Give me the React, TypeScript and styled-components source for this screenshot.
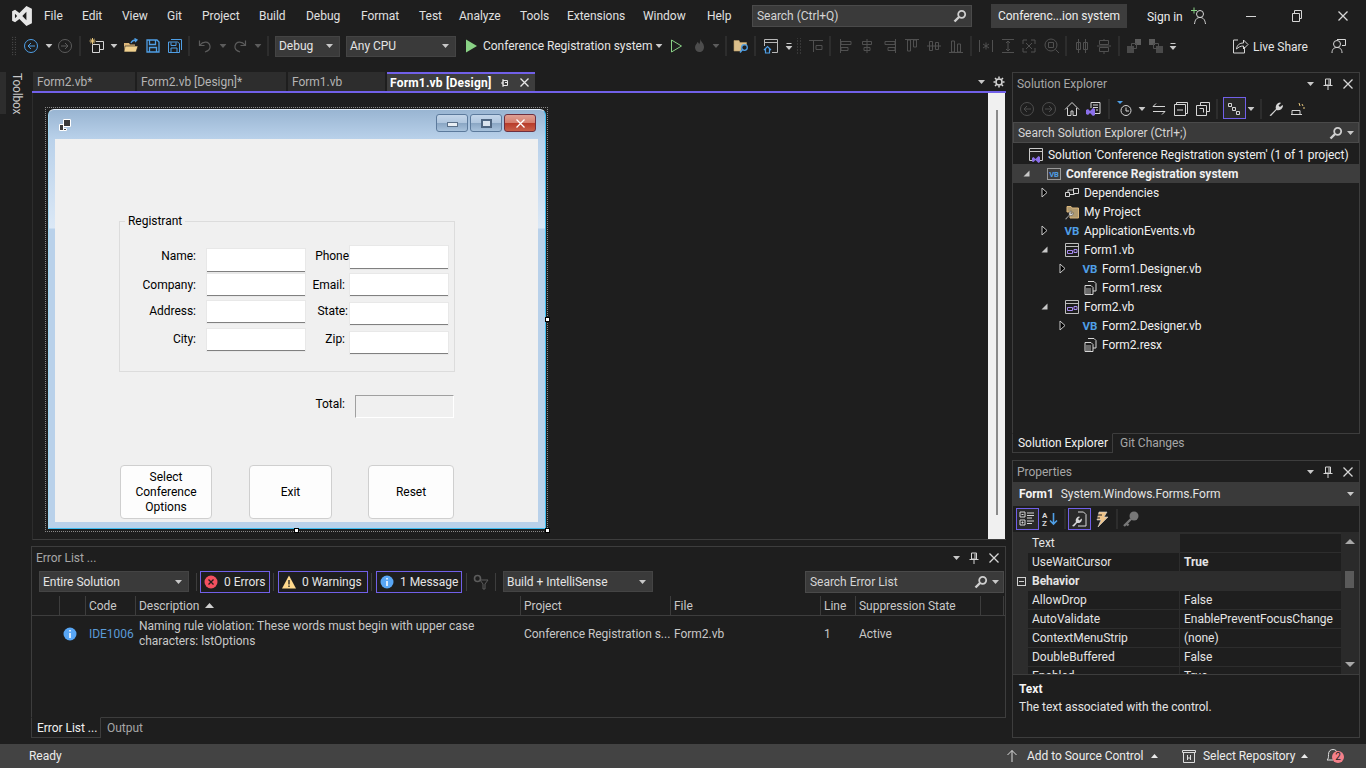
import React, { ReactNode } from 'react';
import styled, { createGlobalStyle } from 'styled-components';

const FONT = `Roboto, "Noto Sans", "Liberation Sans", sans-serif`;
const ACCENT = '#7160e8';

const GlobalStyle = createGlobalStyle`
  html, body { margin: 0; padding: 0; background: #1e1e1e; }
  * { box-sizing: border-box; }
  body { font-family: ${FONT}; font-size: 12px; color: #e4e4e4; letter-spacing: -0.03px; }
`;

const Shell = styled.div`
  width: 1366px;
  height: 768px;
  display: flex;
  flex-direction: column;
  overflow: hidden;
  background: #1e1e1e;
`;

/* ---------- drawing helpers ---------- */

const Glyph = styled.svg`
  display: block;
  flex: none;
`;

const Ico = ({ s = 16, vb, children }: { s?: number; vb?: string; children: ReactNode }) => (
  <Glyph width={s} height={s} viewBox={vb || `0 0 ${s} ${s}`} fill="none">
    {children}
  </Glyph>
);

const DIM = '#5c5c5c';
const FAINT = '#505050';
const LITE = '#d6d6d6';
const BLUE = '#4f9fe6';

const Caret = ({ c = '#c8c8c8', up }: { c?: string; up?: boolean }) => (
  <Glyph width="7" height="4" viewBox="0 0 7 4">
    <path d={up ? 'M0 4h7L3.500 0z' : 'M0 0h7L3.500 4z'} fill={c} />
  </Glyph>
);

const CaretBar = () => (
  <Glyph width="7" height="7" viewBox="0 0 7 7">
    <path d="M1 0h5v1H1zM0 3h7L3.500 7z" fill="#c8c8c8" />
  </Glyph>
);

const Logo = () => (
  <Glyph width="22" height="22" viewBox="0 0 20 20">
    <path
      fillRule="evenodd"
      d="M14 1l5 2.400v13.200L14 19l-6.400-6.300-3.900 3L1 14.300V5.700l2.700-1.400 3.900 3L14 1zm0 5.200L10.300 10l3.700 3.800V6.200zM3.600 8v4l2-2-2-2z"
      fill="#e6e6e6"
    />
  </Glyph>
);

const CircleArrow = ({ c, back }: { c: string; back?: boolean }) => (
  <Ico>
    <circle cx="8" cy="8" r="6.500" stroke={c} />
    <path d={back ? 'M12 8H5M8 5L5 8l3 3' : 'M4 8h7M8 5l3 3-3 3'} stroke={c} />
  </Ico>
);

const NewProject = () => (
  <Ico>
    <path d="M3.500 0v6M.5 3h6M1.300 1l4.400 4M5.700 1L1.300 5" stroke="#e8c77c" />
    <path d="M3.500 6.500h7v8h-7zM7 3.500h7.500v8H10.500" stroke={LITE} />
  </Ico>
);

const OpenFolder = () => (
  <Ico>
    <path d="M1 14V5h5l1 1.500h5V14z" fill="#dcb67a" />
    <path d="M2 8h13l-2 6H1z" fill="#f0d08e" stroke="#1e1e1e" strokeWidth=".6" />
    <path d="M8 5c1-2.500 3-3 5-3M11.500 .5L14 2l-2 2" stroke={BLUE} strokeWidth="1.300" />
  </Ico>
);

const Save = () => (
  <Ico>
    <path d="M2 2h10l2 2v10H2zM4.500 2.500v4h6v-4M4.500 14V9.500h7V14" stroke={BLUE} strokeWidth="1.300" />
  </Ico>
);

const SaveAll = () => (
  <Ico>
    <path d="M4 1.500h10.500V12M1.500 4h9l2 1.500v9h-11zM4 4.500v3h5v-3M4 14V10h6v4" stroke={BLUE} />
  </Ico>
);

const Undo = ({ flip }: { flip?: boolean }) => (
  <Ico>
    <g transform={flip ? 'matrix(-1 0 0 1 16 0)' : undefined}>
      <path d="M3 7c3-4 9-4 10 1 .5 3-2 5-5 6M2.500 2.500V7.500h5" stroke={DIM} strokeWidth="1.200" />
    </g>
  </Ico>
);

const Play = () => (
  <Ico>
    <path d="M3 1.500L14 8 3 14.500z" fill="#89d185" />
  </Ico>
);

const PlayOutline = () => (
  <Ico>
    <path d="M3.500 2L13.500 8l-10 6z" stroke="#89d185" />
  </Ico>
);

const Flame = () => (
  <Ico>
    <path d="M8 1c1 3 4 4 4 8 0 3-2 5-4.500 5S3 12 3 9.500C3 7 5 6 5.500 4c1 .5 1.500 1.500 1.500 2.500C8 5 8.500 3 8 1z" fill="#4d4d4d" />
  </Ico>
);

const FolderSearch = () => (
  <Ico>
    <path d="M1 13V2.500h5l1 2h6.500V7H9.500L8 10v3z" fill="#dcc08c" stroke="#b89a66" strokeWidth=".6" />
    <circle cx="11.500" cy="9.500" r="2.800" stroke={BLUE} strokeWidth="1.300" />
    <path d="M9.500 11.500l-2.500 3" stroke={BLUE} strokeWidth="1.500" />
  </Ico>
);

const WinHome = () => (
  <Ico>
    <path d="M9 14.500h5.500v-13h-13V8M1.500 4.500h13" stroke="#b8b8b8" />
    <path d="M1 12l3.500-3.500L8 12M2.500 11v4h4v-4" stroke={BLUE} strokeWidth="1.200" />
  </Ico>
);

const Dots = () => (
  <Ico>
    <path d="M6 0h1M9 0h1M6 3h1M9 3h1M6 6h1M9 6h1M6 9h1M9 9h1M6 12h1M9 12h1M6 15h1M9 15h1" stroke={FAINT} />
  </Ico>
);

const Align = ({ d }: { d: string }) => (
  <Ico>
    <path d={d} stroke={FAINT} />
  </Ico>
);

const ALIGN = {
  t: 'M1 2.500h14M5.500 3v11M8 7.500h6v4H8z',
  a: 'M2.500 1v14M3 3.500h10v3H3zM3 9.500h7v3H3z',
  b: 'M8 1v14M3.500 3.500h9v3h-9zM5 9.500h6v3H5z',
  c: 'M13.500 1v14M3 3.500h10v3H3zM6 9.500h7v3H6z',
  d: 'M1 1.500h14M3.500 2v11h3V2zM9.500 2v7h3V2z',
  e: 'M1 8h14M3.500 3.500v9h3v-9zM9.500 4.500v7h3v-7z',
  f: 'M1 14.500h14M3.500 3v11h3V3zM9.500 6v8h3V6z',
  g: 'M1.500 2v12M14.500 2v12M8 4.500v7M5 6l6 4M11 6l-6 4',
  h: 'M2 1.500h12M2 14.500h12M8 3v10M6 5l2-2 2 2M6 11l2 2 2-2',
  i: 'M2 6V2h4M10 2h4v4M14 10v4h-4M6 14H2v-4M5 5l6 6M11 5l-6 6',
  j: 'M7 1a6 6 0 100 12A6 6 0 007 1zM11.500 11.500L15 15M4.500 4.500h5v5h-5z',
  k: 'M2.500 4.500h4v7h-4zM9.500 4.500h4v7h-4zM4.500 1v14M11.500 1v14',
  l: 'M3.500 2.500h9v4h-9zM3.500 9.500h9v4h-9zM1 8h14M8 1v2M8 14v2',
};

const Layered = ({ flip }: { flip?: boolean }) => (
  <Ico>
    <g transform={flip ? 'matrix(-1 0 0 1 16 0)' : undefined}>
      <path d="M1 8h7v7H1z" fill="#4a4a4a" />
      <path d="M9 1h6v6H9z" fill={DIM} />
      <path d="M5.500 5.500h5v5h-5z" stroke={FAINT} />
    </g>
  </Ico>
);

const LiveShare = () => (
  <Ico s={18}>
    <path d="M7 3H2.500v13h11V10" stroke={LITE} />
    <path d="M5.500 12c.5-4 3-6 7-6V3l4.500 4.500L12.500 12V9c-3 0-5 1-7 3z" stroke={LITE} />
  </Ico>
);

const Feedback = () => (
  <Ico s={18}>
    <path d="M7 2.500h8.500v6H12" stroke={LITE} />
    <circle cx="7" cy="7" r="3.500" stroke={LITE} />
    <path d="M2 16c0-4 2-5.500 5-5.500S12 12 12 16" stroke={LITE} />
  </Ico>
);

const Person = () => (
  <Ico s={18}>
    <path d="M4 .5v6M1 3.500h6" stroke="#89d185" />
    <circle cx="10" cy="7" r="3.500" stroke={LITE} />
    <path d="M4.500 17c.5-4 2-6.500 5.500-6.500s5 2.500 5.500 6.500" stroke={LITE} />
  </Ico>
);

const Magnifier = ({ c = '#cfcfcf' }: { c?: string }) => (
  <Ico s={14}>
    <circle cx="8.700" cy="5.300" r="3.500" stroke={c} strokeWidth="1.800" />
    <path d="M6 8L1.500 12.500" stroke={c} strokeWidth="2.400" />
  </Ico>
);

const Pin = () => (
  <Ico s={12}>
    <path d="M3.500 1h5v6h-5zM1.500 7.500h9M6 8v4M7 1.500v5" stroke={LITE} />
  </Ico>
);

const TabPin = () => (
  <Ico s={10}>
    <path d="M3 2.500h4.500v5H3zM1 5h2M3 1v8M5 4.500h2.500" stroke="#e8e8e8" />
  </Ico>
);

const Cross = ({ s = 12, c = LITE }: { s?: number; c?: string }) => (
  <Ico s={s}>
    <path d={`M1.500 1.500l${s - 3} ${s - 3}M${s - 1.5} 1.500l-${s - 3} ${s - 3}`} stroke={c} strokeWidth="1.300" />
  </Ico>
);

const Gear = () => (
  <Ico s={12}>
    <circle cx="6" cy="6" r="3" stroke={LITE} strokeWidth="1.500" />
    <path d="M6 .5v2M6 9.500v2M.5 6h2M9.500 6h2M2 2l1.500 1.500M8.500 8.500L10 10M10 2L8.500 3.500M3.500 8.500L2 10" stroke={LITE} strokeWidth="1.500" />
  </Ico>
);

const Home = () => (
  <Ico>
    <path d="M1 8.500L8 1.500l7 7M3.500 7v7.500h3.500V10h2v4.500h3.500V7" stroke={LITE} />
  </Ico>
);

const VsDoc = () => (
  <Ico>
    <path d="M6 7V1.500h9v11H10" stroke={LITE} />
    <path d="M8 4h5M8 6.500h5M11 9h2" stroke={LITE} />
    <path d="M1 9l2-1 2 2 3-3 2 1v6l-2 1-3-3-2 2-2-1z" fill="#8a6fe8" />
  </Ico>
);

const History = () => (
  <Ico>
    <path d="M0 0h6L3 3z" fill={BLUE} />
    <circle cx="9" cy="9.500" r="5" stroke={LITE} />
    <path d="M9 6.500v3.500h3" stroke={LITE} />
  </Ico>
);

const Sync = () => (
  <Ico>
    <path d="M14 5.500H2M5 2.500L2 5.500M2 10.500h12M11 13.500l3-3" stroke={LITE} />
  </Ico>
);

const Collapse = () => (
  <Ico>
    <path d="M1.500 3.500h11v11h-11zM3.500 3V1.500h11v11H13M4 9h6" stroke={LITE} />
  </Ico>
);

const Copies = () => (
  <Ico>
    <path d="M5.500 4.500V1.500h9v9h-3M1.500 4.500h10v10h-10zM4.500 7.500h4v4" stroke={LITE} />
  </Ico>
);

const Hierarchy = () => (
  <Ico>
    <path d="M2.500 2.500h3v3h-3zM6.500 6.500h3v3h-3zM10.500 10.500h3v3h-3zM5.500 5.500l1 1M9.500 9.500l1 1" stroke={LITE} />
  </Ico>
);

const Wrench = () => (
  <Ico>
    <path d="M1.500 14.500L8 8c-1-2.500 .5-6 4-6.500l1 .5-2.500 2.500 1.500 1.500L14.500 4l.5 1c-.5 3.500-4 5-6.500 4L3 15z" fill={LITE} />
  </Ico>
);

const Preview = () => (
  <Ico>
    <path d="M1 13.500h11M2 13V9.500h8V13" stroke={LITE} />
    <path d="M12 3l1 2M15 7h-2M9 2l1 3" stroke="#e8c77c" />
  </Ico>
);

const VbBox = () => (
  <Ico s={16}>
    <rect x="1.500" y="2.500" width="13" height="11" stroke="#9a9a9a" />
    <text x="8" y="11" textAnchor="middle" fontSize="7.500" fontWeight="700" fill={BLUE} fontFamily={FONT}>
      VB
    </text>
  </Ico>
);

const VbText = () => (
  <Ico s={16}>
    <text x="8" y="12" textAnchor="middle" fontSize="11.500" fontWeight="700" fill={BLUE} fontFamily={FONT}>
      VB
    </text>
  </Ico>
);

const SolutionIcon = () => (
  <Ico>
    <path d="M1.500 1.500h13v12H9M5 13.500H1.500v-12M1.500 4.500h13" stroke="#c8c8c8" />
    <path d="M4 11l1.500-1 2 2 3-3 1.500 1v5l-1.500 1-3-3-2 2L4 14.500z" fill="#8a6fe8" />
  </Ico>
);

const DepsIcon = () => (
  <Ico>
    <path d="M1.500 7.500h4v4h-4zM9.500 3.500h5v5h-5zM5.500 9.500h5M4 7V5h5.500" stroke={LITE} />
  </Ico>
);

const MyProject = () => (
  <Ico>
    <path d="M3 2.500h4l1 1.500h6.500v10H6V8H3z" fill="#b09a70" stroke="#dcb67a" />
    <path d="M1 15l4-4c-.5-1.500 0-3.500 2-4l1 .5L6.500 9l1 1 1.500-1.500.5 1c-.5 2-2.500 2.500-4 2L2 15.500z" fill={LITE} stroke="#1e1e1e" strokeWidth=".4" />
  </Ico>
);

const FormIcon = () => (
  <Ico>
    <path d="M1.500 1.500h13v13h-13zM1.500 4.500h13" stroke="#bdbdbd" />
    <path d="M3.500 8.500h5v3h-5zM10 7.500h3v3h-3z" stroke="#a98cf0" />
  </Ico>
);

const ResxIcon = () => (
  <Ico>
    <path d="M6 1.500h6l2 2V11h-3M3 5.500h6l2 2v7H3z" stroke={LITE} />
    <path d="M4 8h5v6H4z" fill="#6a6a6a" />
  </Ico>
);

const TriClosed = () => (
  <Glyph width="7" height="11" viewBox="0 0 7 11">
    <path d="M1 1l5 4.500L1 10z" stroke="#c8c8c8" />
  </Glyph>
);

const TriOpen = () => (
  <Glyph width="7" height="7" viewBox="0 0 7 7">
    <path d="M6.500 .5v6h-6z" fill="#c8c8c8" />
  </Glyph>
);

const CatSort = () => (
  <Ico s={18}>
    <path d="M2 2h5v5H2zM2 10h5v5H2z" stroke={LITE} fill="none" />
    <path d="M3.500 4.500h2M3.500 12.500h2M4.500 11.500v2M9 3h7M9 5.500h7M9 8h5M9 11h7M9 13.500h5" stroke={LITE} />
  </Ico>
);

const AzSort = () => (
  <Ico s={18}>
    <text x="1" y="7.500" fontSize="8" fontWeight="700" fill={LITE} fontFamily={FONT}>A</text>
    <text x="1" y="16" fontSize="8" fontWeight="700" fill={LITE} fontFamily={FONT}>Z</text>
    <path d="M12.500 3v11M9 10.500l3.500 3.500 3.500-3.500" stroke={BLUE} strokeWidth="1.600" />
  </Ico>
);

const PropPage = () => (
  <Ico s={18}>
    <path d="M8 2h5.500l2.500 2.500V16H8" stroke={LITE} />
    <path d="M2 16l4-4c-.8-2 .3-5 3-5.500l1 .5-2 2 1.500 1.500 2-2 .5 1c-.5 3-3 4-5 3.500L4 16.500z" fill={LITE} />
  </Ico>
);

const Bolt = () => (
  <Ico s={18}>
    <path d="M6 2h8l-3 5h4L5 17l3-7H4z" fill="#f0c58a" stroke={LITE} strokeWidth=".6" />
    <path d="M4 5h5M3 8h4" stroke="#1e1e1e" />
  </Ico>
);

const KeyIcon = () => (
  <Ico s={18}>
    <circle cx="12" cy="6" r="4.500" fill="#777" />
    <path d="M9 9l-7 7M4.500 13.500l2 2" stroke="#777" strokeWidth="2.400" />
  </Ico>
);

const FilterIcon = () => (
  <Ico s={16}>
    <circle cx="4.500" cy="4.500" r="3" stroke={DIM} strokeWidth="1.600" />
    <path d="M7 6h8l-3 4v5h-2v-5z" stroke={DIM} />
  </Ico>
);

const ErrorBadge = () => (
  <Ico s={14}>
    <circle cx="7" cy="7" r="6.500" fill="#f4505f" />
    <path d="M4.500 4.500l5 5M9.500 4.500l-5 5" stroke="#1e1e1e" strokeWidth="1.300" />
  </Ico>
);

const WarnBadge = () => (
  <Ico s={14}>
    <path d="M7 .5L14 13.500H0z" fill="#ffd98c" />
    <path d="M7 5v4.500M7 10.500v1.500" stroke="#1e1e1e" strokeWidth="1.300" />
  </Ico>
);

const InfoBadge = () => (
  <Ico s={14}>
    <circle cx="7" cy="7" r="6.500" fill="#58a6f5" />
    <path d="M7 6v5M7 3v1.500" stroke="#fff" strokeWidth="1.500" />
  </Ico>
);

const ArrowUp = () => (
  <Ico s={14}>
    <path d="M7 13V1.500M2.500 6L7 1.500 11.500 6" stroke="#dcdcdc" />
  </Ico>
);

const RepoIcon = () => (
  <Ico s={16}>
    <path d="M1.500 2.500h13v2h-13zM2.500 4.500v10h11v-10M6.500 7v5M9.500 7v5M6.500 10h3" stroke="#dcdcdc" />
  </Ico>
);

const Bell = () => (
  <Ico s={16}>
    <path d="M2 12c1.500-1 1.500-3 1.500-5.500C3.500 3 5.500 1.500 8 1.500s4.500 1.500 4.500 5V9M2 12h6" stroke="#dcdcdc" />
  </Ico>
);

/* ---------- toolbar strips: icons are centred on x positions ---------- */

const Strip = styled.div<{ $pad: number }>`
  display: flex;
  align-items: center;
  flex: none;
  height: 100%;
  padding-left: ${(p) => p.$pad}px;
`;

const Slot = styled.div<{ $w: number }>`
  flex: none;
  width: ${(p) => p.$w}px;
  height: 100%;
  display: flex;
  align-items: center;
  & > svg,
  & > i {
    transform: translateX(-50%);
  }
`;

const Sep = styled.i`
  display: block;
  flex: none;
  width: 1px;
  height: 20px;
  background: #3d3d3d;
`;

const Grip = styled.i`
  display: block;
  flex: none;
  width: 5px;
  height: 20px;
  background-image: radial-gradient(#6b6b6b 0.7px, transparent 0.8px);
  background-size: 2.500px 2.500px;
`;

type Tool = [number, ReactNode];

const ToolStrip = ({ from, to, tools }: { from: number; to: number; tools: Tool[] }) => (
  <Strip $pad={tools[0][0] - from}>
    {tools.map(([x, node], i) => (
      <Slot key={i} $w={(i + 1 < tools.length ? tools[i + 1][0] : to) - x}>
        {node}
      </Slot>
    ))}
  </Strip>
);

/* ---------- menu bar ---------- */

const MenuBar = styled.div`
  height: 32px;
  flex: none;
  display: flex;
  align-items: center;
`;

const LogoSlot = styled.div`
  width: 44px;
  padding-left: 11px;
  flex: none;
`;

const MenuItem = styled.div<{ $w: number }>`
  width: ${(p) => p.$w}px;
  flex: none;
  color: #e0e0e0;
  font-size: 12px;
`;

const SearchBox = styled.div<{ $w: number; $h?: number; $left?: number }>`
  width: ${(p) => p.$w}px;
  height: ${(p) => p.$h || 22}px;
  margin-left: ${(p) => p.$left || 0}px;
  flex: none;
  display: flex;
  align-items: center;
  justify-content: space-between;
  padding: 0 4px;
  background: #3a3a3a;
  border: 1px solid #4a4a4a;
  color: #d4d4d4;
  font-size: 12px;
`;

const SearchTools = styled.div`
  display: flex;
  align-items: center;
  gap: 4px;
`;

const TitleChip = styled.div`
  width: 136px;
  height: 24px;
  margin-left: 19px;
  flex: none;
  display: flex;
  align-items: center;
  justify-content: center;
  background: #3d3d3d;
  color: #ececec;
`;

const SignIn = styled.div`
  margin-left: 20px;
  width: 43px;
  flex: none;
  color: #ececec;
  padding-top: 2px;
`;

const WinButtons = styled.div`
  flex: none;
  display: grid;
  grid-template-columns: repeat(3, 46px);
  margin-left: 20px;
  justify-items: center;
  align-items: center;
`;

const menus: [string, number][] = [
  ['File', 38],
  ['Edit', 40],
  ['View', 45],
  ['Git', 35],
  ['Project', 57],
  ['Build', 47],
  ['Debug', 55],
  ['Format', 58],
  ['Test', 40],
  ['Analyze', 61],
  ['Tools', 47],
  ['Extensions', 76],
  ['Window', 64],
  ['Help', 45],
];

/* ---------- standard toolbar ---------- */

const TopBar = styled.div`
  height: 28px;
  flex: none;
  display: flex;
  align-items: center;
`;

const Combo = styled.div<{ $w: number; $gap?: number }>`
  width: ${(p) => p.$w}px;
  height: 21px;
  margin-left: ${(p) => p.$gap || 0}px;
  flex: none;
  display: flex;
  align-items: center;
  justify-content: space-between;
  padding: 0 6px 0 3px;
  background: #3a3a3a;
  border: 1px solid #444;
  color: #e4e4e4;
`;

const PlainText = styled.span<{ $c?: string; $drop?: boolean }>`
  flex: none;
  white-space: nowrap;
  color: ${(p) => p.$c || '#e4e4e4'};
  padding-top: ${(p) => (p.$drop ? 2 : 0)}px;
`;

/* ---------- main area ---------- */

const Main = styled.div`
  flex: 1;
  display: flex;
  min-height: 0;
  padding-top: 12px;
`;

const LeftStrip = styled.div`
  width: 32px;
  flex: none;
  display: flex;
  align-items: flex-start;
`;

const ToolboxBand = styled.div`
  width: 6px;
  height: 42px;
  flex: none;
  background: #2d2d2d;
`;

const ToolboxLabel = styled.div`
  writing-mode: vertical-rl;
  margin-left: 3px;
  padding-top: 1px;
  color: #c8c8c8;
  font-size: 12px;
  line-height: 15px;
  letter-spacing: -0.2px;
`;

const Center = styled.div`
  width: 974px;
  flex: none;
  display: flex;
  flex-direction: column;
`;

const TabRow = styled.div`
  height: 21px;
  flex: none;
  display: flex;
  align-items: stretch;
  border-bottom: 2px solid ${ACCENT};
  gap: 2px;
`;

const DocTab = styled.div<{ $w: number; $active?: boolean; $first?: boolean }>`
  width: ${(p) => p.$w}px;
  flex: none;
  margin-left: ${(p) => (p.$first ? 1 : 0)}px;
  display: flex;
  align-items: center;
  padding: 0 ${(p) => (p.$active ? 3 : 4)}px;
  gap: 9px;
  background: ${(p) => (p.$active ? '#3d3d3d' : '#2d2d2d')};
  border-top: ${(p) => (p.$active ? `2px solid ${ACCENT}` : '0')};
  color: ${(p) => (p.$active ? '#fff' : '#b4b4b4')};
  font-weight: ${(p) => (p.$active ? 700 : 400)};
  letter-spacing: ${(p) => (p.$active ? '0.2px' : 'inherit')};
  white-space: nowrap;
`;

const TabEnd = styled.div`
  margin-left: auto;
  display: flex;
  align-items: center;
  gap: 8px;
  padding-right: 1px;
`;

const Designer = styled.div`
  height: 447px;
  flex: none;
  display: flex;
  justify-content: space-between;
  border-bottom: 1px solid #3d3d3d;
  border-left: 1px solid #2d2d2d;
`;

const DesignSurface = styled.div`
  padding: 14px 0 0 12px;
`;

const DesignScroll = styled.div`
  width: 17px;
  flex: none;
  margin-right: 1px;
  background: #f0f0f0;
  padding: 17px 7px 24px 8px;
  & > div {
    height: 100%;
    background: #8a8a8a;
  }
`;

/* ---------- the form under design ---------- */

const Selection = styled.div`
  width: 503px;
  height: 425px;
  padding: 2px 2px 0 3px;
  position: relative;
  outline: 1px dotted #8a8a8a;
  outline-offset: -1px;
`;

const Handle = styled.span<{ $x: number; $y: number }>`
  position: absolute;
  left: ${(p) => p.$x}px;
  top: ${(p) => p.$y}px;
  width: 5px;
  height: 5px;
  background: #fff;
  border: 1px solid #000;
`;

const FormWindow = styled.div`
  width: 498px;
  height: 420px;
  display: flex;
  flex-direction: column;
  border-radius: 6px 6px 0 0;
  border-top: 1px solid #e4eef8;
  border-right: 1px solid #3cbcf0;
  border-bottom: 1px solid #3cbcf0;
  border-left: 1px solid #9fd6f0;
  background: linear-gradient(#99b5d2 0, #b9d1ea 29px, #dbe8f6 118px, #b9d1ea 119px);
  padding: 0 6px 5px;
`;

const FormTitle = styled.div`
  height: 29px;
  flex: none;
  display: flex;
  align-items: center;
  justify-content: space-between;
  padding: 0 3px 0 3px;
`;

const CapButtons = styled.div`
  display: flex;
  gap: 2px;
  margin-top: -3px;
`;

const CapButton = styled.div<{ $close?: boolean }>`
  width: 32px;
  height: 18px;
  display: flex;
  align-items: center;
  justify-content: center;
  border: 1px solid ${(p) => (p.$close ? '#6e3040' : '#5c7a9c')};
  border-radius: 3px;
  background: ${(p) =>
    p.$close
      ? 'linear-gradient(#e0a094 0, #d57f6e 48%, #b83c2a 52%, #c8604a 100%)'
      : 'linear-gradient(#c4d6ea 0, #b0c6de 48%, #8aa6c4 52%, #a8c2dc 100%)'};
`;

const CapMin = styled.i`
  display: block;
  width: 11px;
  height: 5px;
  margin-top: 3px;
  background: #e8eef4;
  border: 1px solid #5a6f88;
`;

const CapMax = styled.i`
  display: block;
  width: 11px;
  height: 9px;
  background: #dbe4ee;
  border: 2px solid #4e6580;
`;

const FormClient = styled.div`
  width: 483px;
  height: 383px;
  position: relative;
  background: #f0f0f0;
  color: #000;
  font-size: 12px;
`;

const GroupFrame = styled.div`
  position: absolute;
  left: 64px;
  top: 82px;
  width: 336px;
  height: 151px;
  border: 1px solid #dcdcdc;
`;

const GroupLegend = styled.span`
  position: absolute;
  left: 5px;
  top: -9px;
  padding: 0 3px;
  line-height: 16px;
  background: #f0f0f0;
`;

const FormLabel = styled.span<{ $end: number; $y: number }>`
  position: absolute;
  right: ${(p) => 483 - p.$end}px;
  top: ${(p) => p.$y}px;
  line-height: 16px;
  white-space: nowrap;
`;

const TextInput = styled.div<{ $x: number; $y: number; $h: number }>`
  position: absolute;
  left: ${(p) => p.$x}px;
  top: ${(p) => p.$y}px;
  width: 98px;
  height: ${(p) => p.$h}px;
  background: #fff;
  border-bottom: 1px solid #808080;
  outline: 1px solid #e8e8e8;
`;

const ReadOnlyBox = styled.div`
  position: absolute;
  left: 300px;
  top: 256px;
  width: 99px;
  height: 23px;
  background: #f0f0f0;
  border: 1px solid;
  border-color: #a0a0a0 #fff #fff #a0a0a0;
`;

const FormButton = styled.div<{ $x: number; $w: number }>`
  position: absolute;
  left: ${(p) => p.$x}px;
  top: 326px;
  width: ${(p) => p.$w}px;
  height: 54px;
  display: flex;
  align-items: center;
  justify-content: center;
  text-align: center;
  line-height: 15px;
  background: #fdfdfd;
  border: 1px solid #cfcfcf;
  border-radius: 4px;
`;

const formLabels: [string, number, number][] = [
  ['Name:', 141, 109],
  ['Company:', 141, 138],
  ['Address:', 141, 164],
  ['City:', 141, 192],
  ['Phone', 294, 109],
  ['Email:', 290, 138],
  ['State:', 293, 164],
  ['Zip:', 290, 192],
  ['Total:', 290, 257],
];

const formInputs: [number, number, number][] = [
  [152, 110, 23],
  [152, 135, 22],
  [152, 162, 22],
  [152, 190, 22],
  [295, 107, 23],
  [295, 135, 22],
  [295, 164, 22],
  [295, 193, 22],
];

/* ---------- tool panels ---------- */

const ToolPanel = styled.div<{ $h: number; $top?: number }>`
  height: ${(p) => p.$h}px;
  flex: none;
  margin-top: ${(p) => p.$top || 0}px;
  display: flex;
  flex-direction: column;
  border: 1px solid #3d3d3d;
`;

const ErrorPanel = styled(ToolPanel)`
  margin-left: -1px;
`;

const PanelHead = styled.div`
  height: 22px;
  flex: none;
  display: flex;
  align-items: center;
  justify-content: space-between;
  padding: 0 5px 0 4px;
  color: #a6a6a6;
  font-size: 12px;
`;

const HeadButtons = styled.div`
  display: flex;
  align-items: center;
  gap: 8px;
`;

const ErrorTools = styled.div`
  height: 25px;
  flex: none;
  display: flex;
  align-items: center;
`;

const Chip = styled.div<{ $w: number; $gap: number }>`
  width: ${(p) => p.$w}px;
  height: 22px;
  margin-left: ${(p) => p.$gap}px;
  flex: none;
  display: flex;
  align-items: center;
  gap: 6px;
  padding: 0 3px;
  border: 1px solid ${ACCENT};
  color: #e4e4e4;
  white-space: nowrap;
`;

const ChipSep = styled.i<{ $gap: number }>`
  display: block;
  width: 1px;
  height: 18px;
  flex: none;
  background: #3d3d3d;
  margin-left: ${(p) => p.$gap}px;
`;

const FilterSlot = styled.div`
  width: 22px;
  flex: none;
  display: flex;
  justify-content: flex-end;
`;

const ERROR_COLS = '28px 26px 50px 385px 150px 150px 35px 125px 23px';

const ErrorHead = styled.div`
  height: 20px;
  margin-top: 2px;
  flex: none;
  display: grid;
  grid-template-columns: ${ERROR_COLS};
  border-bottom: 1px solid #3d3d3d;
  color: #c8c8c8;
`;

const HeadCell = styled.div`
  display: flex;
  align-items: center;
  gap: 6px;
  padding: 0 3px;
  border-right: 1px solid #3d3d3d;
`;

const ErrorRow = styled.div`
  height: 36px;
  flex: none;
  display: grid;
  grid-template-columns: ${ERROR_COLS};
  color: #c8c8c8;
`;

const RowCell = styled.div<{ $c?: string }>`
  display: flex;
  align-items: center;
  padding: 0 3px;
  color: ${(p) => p.$c || '#c8c8c8'};
  white-space: nowrap;
  line-height: 15px;
  overflow: hidden;
`;

const WrapCell = styled(RowCell)`
  white-space: normal;
`;

const BottomTabs = styled.div`
  flex: 1;
  margin-left: -1px;
  display: flex;
  align-items: flex-start;
`;

const PanelTab = styled.div<{ $w: number; $active?: boolean }>`
  width: ${(p) => p.$w}px;
  height: 20px;
  flex: none;
  display: flex;
  align-items: center;
  padding: 0 6px;
  white-space: nowrap;
  color: #a6a6a6;
  background: #1e1e1e;
  ${(p) =>
    p.$active
      ? 'margin-top: -1px; height: 21px; padding: 0 5px; color: #f0f0f0; border: 1px solid #3d3d3d; border-top-color: #1e1e1e;'
      : ''}
`;

/* ---------- right column ---------- */

const Right = styled.div`
  width: 348px;
  flex: none;
  margin-left: 6px;
  display: flex;
  flex-direction: column;
`;

const ToolRow = styled.div<{ $h: number }>`
  height: ${(p) => p.$h}px;
  flex: none;
  position: relative;
`;

const ActiveBox = styled.div<{ $x: number; $y: number }>`
  position: absolute;
  left: ${(p) => p.$x}px;
  top: ${(p) => p.$y}px;
  width: 23px;
  height: 22px;
  border: 1px solid ${ACCENT};
  background: #2a2a2a;
`;

const TreeList = styled.div`
  flex: 1;
  padding-top: 2px;
`;

const TreeRow = styled.div<{ $pad: number; $sel?: boolean }>`
  height: 19px;
  display: flex;
  align-items: center;
  padding-left: ${(p) => p.$pad}px;
  background: ${(p) => (p.$sel ? '#3d3d3d' : 'transparent')};
  color: #f0f0f0;
  font-weight: ${(p) => (p.$sel ? 700 : 400)};
  white-space: nowrap;
`;

const ArrowSlot = styled.div`
  width: 26px;
  flex: none;
  display: flex;
  justify-content: flex-start;
  padding-left: 4px;
`;

const IconSlot = styled.div`
  width: 18px;
  margin-right: 3px;
  flex: none;
  display: flex;
  justify-content: center;
`;

const TabStrip = styled.div`
  height: 20px;
  flex: none;
  display: flex;
  align-items: flex-start;
`;

const SideTab = styled.div<{ $active?: boolean }>`
  height: 18px;
  padding: 0 4px 0 7px;
  display: flex;
  align-items: center;
  white-space: nowrap;
  color: #a6a6a6;
  ${(p) =>
    p.$active
      ? 'width: 101px; height: 20px; margin-top: -1px; padding: 0 4px 0 5px; color: #f0f0f0; border: 1px solid #3d3d3d; border-top-color: #1e1e1e;'
      : ''}
`;

const ObjectRow = styled.div`
  height: 24px;
  flex: none;
  display: flex;
  align-items: center;
  justify-content: space-between;
  margin-top: -1px;
  padding: 0 5px 0 6px;
  background: #3a3a3a;
  color: #e4e4e4;
  & b {
    font-weight: 700;
    margin-right: 7px;
    color: #f4f4f4;
  }
`;

const PropArea = styled.div`
  height: 142px;
  flex: none;
  display: flex;
  background: #2d2d2d;
`;

const PropGrid = styled.div`
  width: 328px;
  flex: none;
  overflow: hidden;
  padding-top: 2px;
`;

const PropRowBox = styled.div<{ $cat?: boolean }>`
  height: 19px;
  flex: none;
  display: grid;
  grid-template-columns: 15px 152px 161px;
  align-items: stretch;
  padding-bottom: 1px;
  font-weight: ${(p) => (p.$cat ? 700 : 400)};
`;

const CatGutter = styled.div`
  display: flex;
  align-items: center;
  justify-content: center;
`;

const MinusBox = styled.i`
  display: block;
  width: 9px;
  height: 9px;
  margin-left: 2px;
  border: 1px solid #d0d0d0;
  background: linear-gradient(#d0d0d0, #d0d0d0) center / 5px 1px no-repeat;
`;

const NameCell = styled.div<{ $plain?: boolean }>`
  display: flex;
  align-items: center;
  padding-left: 4px;
  margin-right: 1px;
  color: #e4e4e4;
  background: ${(p) => (p.$plain ? 'transparent' : '#1e1e1e')};
  white-space: nowrap;
`;

const ValueCell = styled.div<{ $bold?: boolean; $plain?: boolean }>`
  display: flex;
  align-items: center;
  padding-left: 4px;
  color: #e4e4e4;
  background: ${(p) => (p.$plain ? 'transparent' : '#1e1e1e')};
  font-weight: ${(p) => (p.$bold ? 700 : 400)};
  white-space: nowrap;
`;

const PropScroll = styled.div`
  flex: 1;
  position: relative;
  background: #2a2a2a;
`;

const ScrollThumb = styled.div`
  position: absolute;
  top: 39px;
  left: 4px;
  width: 9px;
  height: 17px;
  background: #5a5a5a;
`;

const ScrollArrow = styled.div<{ $down?: boolean }>`
  position: absolute;
  left: 4px;
  ${(p) => (p.$down ? 'bottom: 7px;' : 'top: 7px;')}
  width: 0;
  height: 0;
  border-left: 5px solid transparent;
  border-right: 5px solid transparent;
  ${(p) => (p.$down ? 'border-top: 5px solid #a8a8a8;' : 'border-bottom: 5px solid #a8a8a8;')}
`;

const Description = styled.div`
  flex: 1;
  padding: 6px;
  border-top: 1px solid #3d3d3d;
  color: #e4e4e4;
  line-height: 17px;
  & b {
    display: block;
    font-weight: 700;
    color: #f4f4f4;
    margin-bottom: 1px;
  }
`;

/* ---------- status bar ---------- */

const StatusBar = styled.div`
  height: 24px;
  flex: none;
  margin-top: 7px;
  display: flex;
  align-items: center;
  background: #434343;
  color: #ececec;
  padding-left: 29px;
`;

const StatusSpacer = styled.div`
  flex: 1;
`;

const StatusItem = styled.div<{ $w: number; $gap: number }>`
  width: ${(p) => p.$w}px;
  flex: none;
  display: flex;
  align-items: center;
  gap: ${(p) => p.$gap}px;
`;

const BellWrap = styled.div`
  width: 41px;
  flex: none;
  position: relative;
`;

const BellBadge = styled.span`
  position: absolute;
  left: 7px;
  top: 3px;
  width: 12px;
  height: 12px;
  border-radius: 50%;
  background: #f4808a;
  color: #1e1e1e;
  font-size: 10px;
  line-height: 12px;
  text-align: center;
`;

/* ---------- small composites ---------- */

const PanelButtons = () => (
  <HeadButtons>
    <Caret />
    <Pin />
    <Cross />
  </HeadButtons>
);

const tree: { label: string; pad: number; icon: ReactNode; arrow?: ReactNode; sel?: boolean }[] = [
  { label: "Solution 'Conference Registration system' (1 of 1 project)", pad: 14, icon: <SolutionIcon /> },
  { label: 'Conference Registration system', pad: 6, icon: <VbBox />, arrow: <TriOpen />, sel: true },
  { label: 'Dependencies', pad: 24, icon: <DepsIcon />, arrow: <TriClosed /> },
  { label: 'My Project', pad: 24, icon: <MyProject />, arrow: <span /> },
  { label: 'ApplicationEvents.vb', pad: 24, icon: <VbText />, arrow: <TriClosed /> },
  { label: 'Form1.vb', pad: 24, icon: <FormIcon />, arrow: <TriOpen /> },
  { label: 'Form1.Designer.vb', pad: 42, icon: <VbText />, arrow: <TriClosed /> },
  { label: 'Form1.resx', pad: 42, icon: <ResxIcon />, arrow: <span /> },
  { label: 'Form2.vb', pad: 24, icon: <FormIcon />, arrow: <TriOpen /> },
  { label: 'Form2.Designer.vb', pad: 42, icon: <VbText />, arrow: <TriClosed /> },
  { label: 'Form2.resx', pad: 42, icon: <ResxIcon />, arrow: <span /> },
];

const props: { name: string; value?: string; bold?: boolean; cat?: boolean; selected?: boolean }[] = [
  { name: 'Text', selected: true },
  { name: 'UseWaitCursor', value: 'True', bold: true },
  { name: 'Behavior', cat: true },
  { name: 'AllowDrop', value: 'False' },
  { name: 'AutoValidate', value: 'EnablePreventFocusChange' },
  { name: 'ContextMenuStrip', value: '(none)' },
  { name: 'DoubleBuffered', value: 'False' },
  { name: 'Enabled', value: 'True' },
];

const App = () => (
  <Shell>
    <GlobalStyle />
    <MenuBar>
      <LogoSlot>
        <Logo />
      </LogoSlot>
      {menus.map(([label, w]) => (
        <MenuItem key={label} $w={w}>
          {label}
        </MenuItem>
      ))}
      <SearchBox $w={220}>
        Search (Ctrl+Q)
        <Magnifier />
      </SearchBox>
      <TitleChip>Conferenc...ion system</TitleChip>
      <SignIn>Sign in</SignIn>
      <Person />
      <WinButtons>
        <Ico s={12}>
          <path d="M1 6.500h10" stroke={LITE} />
        </Ico>
        <Ico s={12}>
          <path d="M1.500 3.500h7v8h-7zM3.500 3V.5h7v8H9" stroke={LITE} />
        </Ico>
        <Cross />
      </WinButtons>
    </MenuBar>

    <TopBar>
      <ToolStrip
        from={0}
        to={275}
        tools={[
          [14, <Grip />],
          [31, <CircleArrow c={BLUE} back />],
          [49, <Caret />],
          [65, <CircleArrow c={DIM} />],
          [80, <Sep />],
          [97, <NewProject />],
          [114, <Caret />],
          [131, <OpenFolder />],
          [153, <Save />],
          [175, <SaveAll />],
          [189, <Sep />],
          [205, <Undo />],
          [223, <Caret c={DIM} />],
          [240, <Undo flip />],
          [258, <Caret c={DIM} />],
          [268, <Sep />],
        ]}
      />
      <Combo $w={65}>
        Debug
        <Caret />
      </Combo>
      <Combo $w={110} $gap={6}>
        Any CPU
        <Caret />
      </Combo>
      <ToolStrip
        from={456}
        to={1366}
        tools={[
          [471, <Play />],
          [483, <PlainText>Conference Registration system</PlainText>],
          [659, <Caret />],
          [676, <PlayOutline />],
          [700, <Flame />],
          [716, <Caret c={DIM} />],
          [726, <Sep />],
          [741, <FolderSearch />],
          [755, <Sep />],
          [771, <WinHome />],
          [789, <CaretBar />],
          [799, <Dots />],
          [816, <Align d={ALIGN.t} />],
          [830, <Sep />],
          [846, <Align d={ALIGN.a} />],
          [867, <Align d={ALIGN.b} />],
          [890, <Align d={ALIGN.c} />],
          [912, <Align d={ALIGN.d} />],
          [934, <Align d={ALIGN.e} />],
          [956, <Align d={ALIGN.f} />],
          [971, <Sep />],
          [986, <Align d={ALIGN.g} />],
          [1008, <Align d={ALIGN.h} />],
          [1029, <Align d={ALIGN.i} />],
          [1052, <Align d={ALIGN.j} />],
          [1066, <Sep />],
          [1082, <Align d={ALIGN.k} />],
          [1104, <Align d={ALIGN.l} />],
          [1119, <Sep />],
          [1134, <Layered />],
          [1156, <Layered flip />],
          [1173, <CaretBar />],
          [1240, <LiveShare />],
          [1253, <PlainText $drop>Live Share</PlainText>],
          [1339, <Feedback />],
        ]}
      />
    </TopBar>

    <Main>
      <LeftStrip>
        <ToolboxBand />
        <ToolboxLabel>Toolbox</ToolboxLabel>
      </LeftStrip>

      <Center>
        <TabRow>
          <DocTab $w={102} $first>
            Form2.vb*
          </DocTab>
          <DocTab $w={149}>Form2.vb [Design]*</DocTab>
          <DocTab $w={97}>Form1.vb</DocTab>
          <DocTab $w={148} $active>
            Form1.vb [Design]
            <TabPin />
            <Cross s={11} c="#e8e8e8" />
          </DocTab>
          <TabEnd>
            <Caret />
            <Gear />
          </TabEnd>
        </TabRow>

        <Designer>
          <DesignSurface>
            <Selection>
              <FormWindow>
                <FormTitle>
                  <Ico s={14}>
                    <path d="M5.500 1.500h7v7h-7zM1.500 6.500h4v6h-4zM5.500 10.500h3v2h-3z" fill="#3a3a3a" stroke="#fff" />
                  </Ico>
                  <CapButtons>
                    <CapButton>
                      <CapMin />
                    </CapButton>
                    <CapButton>
                      <CapMax />
                    </CapButton>
                    <CapButton $close>
                      <Cross s={11} c="#fff" />
                    </CapButton>
                  </CapButtons>
                </FormTitle>
                <FormClient>
                  <GroupFrame>
                    <GroupLegend>Registrant</GroupLegend>
                  </GroupFrame>
                  {formLabels.map(([t, end, y]) => (
                    <FormLabel key={t} $end={end} $y={y}>
                      {t}
                    </FormLabel>
                  ))}
                  {formInputs.map(([x, y, h]) => (
                    <TextInput key={`${x}-${y}`} $x={x} $y={y} $h={h} />
                  ))}
                  <ReadOnlyBox />
                  <FormButton $x={65} $w={92}>
                    Select
                    <br />
                    Conference
                    <br />
                    Options
                  </FormButton>
                  <FormButton $x={194} $w={83}>
                    Exit
                  </FormButton>
                  <FormButton $x={313} $w={86}>
                    Reset
                  </FormButton>
                </FormClient>
              </FormWindow>
              <Handle $x={500} $y={210} />
              <Handle $x={249} $y={421} />
              <Handle $x={500} $y={421} />
            </Selection>
          </DesignSurface>
          <DesignScroll>
            <div />
          </DesignScroll>
        </Designer>

        <ErrorPanel $h={172} $top={6}>
          <PanelHead>
            Error List ...
            <PanelButtons />
          </PanelHead>
          <ErrorTools>
            <Combo $w={150} $gap={7}>
              Entire Solution
              <Caret />
            </Combo>
            <ChipSep $gap={7} />
            <Chip $w={70} $gap={3}>
              <ErrorBadge />0 Errors
            </Chip>
            <ChipSep $gap={3} />
            <Chip $w={90} $gap={4}>
              <WarnBadge />0 Warnings
            </Chip>
            <ChipSep $gap={3} />
            <Chip $w={86} $gap={4}>
              <InfoBadge />1 Message
            </Chip>
            <ChipSep $gap={4} />
            <FilterSlot>
              <FilterIcon />
            </FilterSlot>
            <ChipSep $gap={6} />
            <Combo $w={150} $gap={7}>
              Build + IntelliSense
              <Caret />
            </Combo>
            <SearchBox $w={199} $left={152}>
              Search Error List
              <SearchTools>
                <Magnifier />
                <Caret />
              </SearchTools>
            </SearchBox>
          </ErrorTools>
          <ErrorHead>
            <HeadCell />
            <HeadCell />
            <HeadCell>Code</HeadCell>
            <HeadCell>
              Description
              <Glyph width="9" height="5" viewBox="0 0 9 5">
                <path d="M0 5L4.500 0 9 5z" fill="#d0d0d0" />
              </Glyph>
            </HeadCell>
            <HeadCell>Project</HeadCell>
            <HeadCell>File</HeadCell>
            <HeadCell>Line</HeadCell>
            <HeadCell>Suppression State</HeadCell>
            <HeadCell />
          </ErrorHead>
          <ErrorRow>
            <RowCell />
            <RowCell>
              <InfoBadge />
            </RowCell>
            <RowCell $c="#5a9ad6">IDE1006</RowCell>
            <WrapCell>Naming rule violation: These words must begin with upper case characters: lstOptions</WrapCell>
            <RowCell>Conference Registration s...</RowCell>
            <RowCell>Form2.vb</RowCell>
            <RowCell>1</RowCell>
            <RowCell>Active</RowCell>
            <RowCell />
          </ErrorRow>
        </ErrorPanel>
        <BottomTabs>
          <PanelTab $w={70} $active>
            Error List ...
          </PanelTab>
          <PanelTab $w={60}>Output</PanelTab>
        </BottomTabs>
      </Center>

      <Right>
        <ToolPanel $h={362}>
          <PanelHead>
            Solution Explorer
            <PanelButtons />
          </PanelHead>
          <ToolRow $h={27}>
            <ActiveBox $x={210} $y={2} />
            <ToolStrip
              from={1013}
              to={1320}
              tools={[
                [1027, <CircleArrow c="#4d4d4d" back />],
                [1049, <CircleArrow c="#4d4d4d" />],
                [1072, <Home />],
                [1093, <VsDoc />],
                [1109, <Sep />],
                [1125, <History />],
                [1142, <Caret />],
                [1159, <Sync />],
                [1181, <Collapse />],
                [1203, <Copies />],
                [1217, <Sep />],
                [1234, <Hierarchy />],
                [1251, <Caret />],
                [1261, <Sep />],
                [1276, <Wrench />],
                [1298, <Preview />],
              ]}
            />
          </ToolRow>
          <SearchBox $w={346} $h={21}>
            Search Solution Explorer (Ctrl+;)
            <SearchTools>
              <Magnifier />
              <Caret />
            </SearchTools>
          </SearchBox>
          <TreeList>
            {tree.map((n) => (
              <TreeRow key={n.label} $pad={n.pad} $sel={n.sel}>
                {n.arrow && <ArrowSlot>{n.arrow}</ArrowSlot>}
                <IconSlot>{n.icon}</IconSlot>
                {n.label}
              </TreeRow>
            ))}
          </TreeList>
        </ToolPanel>
        <TabStrip>
          <SideTab $active>Solution Explorer</SideTab>
          <SideTab>Git Changes</SideTab>
        </TabStrip>

        <ToolPanel $h={278} $top={6}>
          <PanelHead>
            Properties
            <PanelButtons />
          </PanelHead>
          <ObjectRow>
            <span>
              <b>Form1</b>System.Windows.Forms.Form
            </span>
            <Caret />
          </ObjectRow>
          <ToolRow $h={26}>
            <ActiveBox $x={3} $y={2} />
            <ActiveBox $x={55} $y={2} />
            <ToolStrip
              from={1013}
              to={1200}
              tools={[
                [1027, <CatSort />],
                [1050, <AzSort />],
                [1065, <Sep />],
                [1079, <PropPage />],
                [1102, <Bolt />],
                [1117, <Sep />],
                [1131, <KeyIcon />],
              ]}
            />
          </ToolRow>
          <PropArea>
            <PropGrid>
              {props.map((r) => (
                <PropRowBox key={r.name} $cat={r.cat}>
                  <CatGutter>{r.cat && <MinusBox />}</CatGutter>
                  <NameCell $plain={r.cat || r.selected}>{r.name}</NameCell>
                  <ValueCell $bold={r.bold} $plain={r.cat}>
                    {r.value}
                  </ValueCell>
                </PropRowBox>
              ))}
            </PropGrid>
            <PropScroll>
              <ScrollArrow />
              <ScrollThumb />
              <ScrollArrow $down />
            </PropScroll>
          </PropArea>
          <Description>
            <b>Text</b>
            The text associated with the control.
          </Description>
        </ToolPanel>
      </Right>
    </Main>

    <StatusBar>
      Ready
      <StatusSpacer />
      <StatusItem $w={176} $gap={8}>
        <ArrowUp />
        Add to Source Control
        <Caret c="#ececec" up />
      </StatusItem>
      <StatusItem $w={144} $gap={6}>
        <RepoIcon />
        Select Repository
        <Caret c="#ececec" up />
      </StatusItem>
      <BellWrap>
        <Bell />
        <BellBadge>2</BellBadge>
      </BellWrap>
    </StatusBar>
  </Shell>
);

export default App;
